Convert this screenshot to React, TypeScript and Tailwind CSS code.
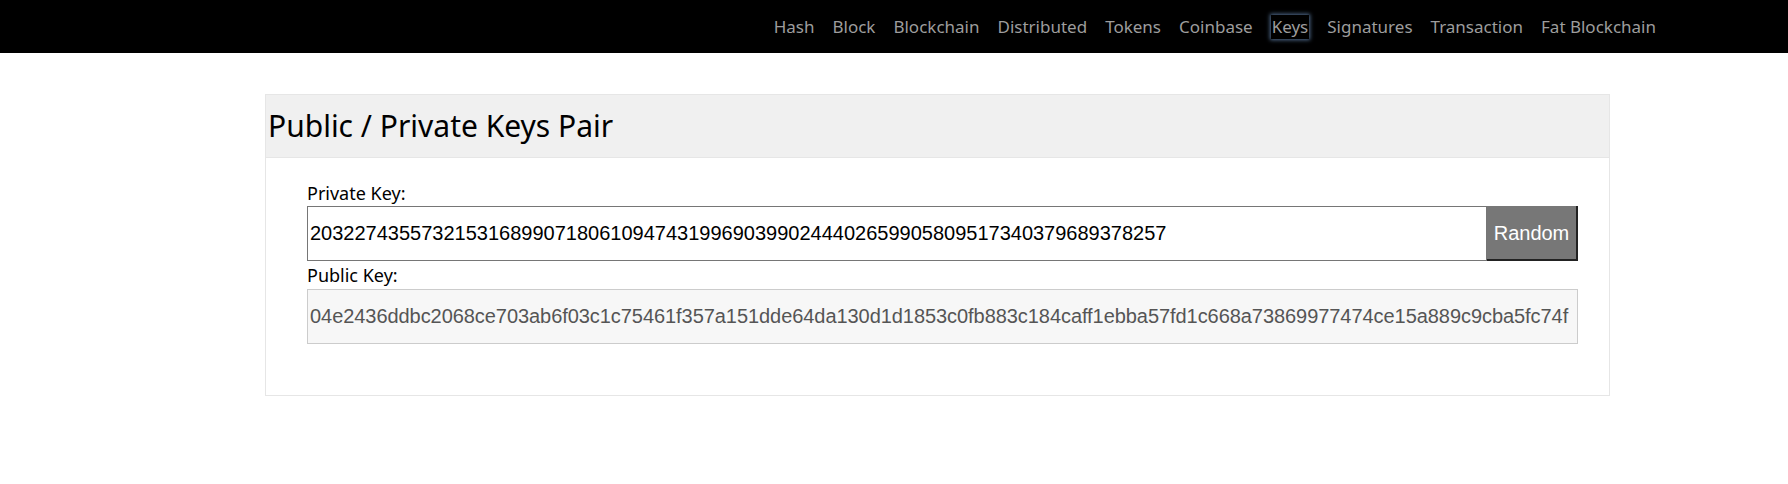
const navItems = [
  "Hash",
  "Block",
  "Blockchain",
  "Distributed",
  "Tokens",
  "Coinbase",
  "Keys",
  "Signatures",
  "Transaction",
  "Fat Blockchain",
];

const privateKey =
  "20322743557321531689907180610947431996903990244402659905809517340379689378257";
const publicKey =
  "04e2436ddbc2068ce703ab6f03c1c75461f357a151dde64da130d1d1853c0fb883c184caff1ebba57fd1c668a73869977474ce15a889c9cba5fc74f";

function NavBar() {
  return (
    <nav className="h-[53px] bg-black flex items-center justify-end pr-[132px]">
      <ul className="flex items-center gap-[18px] text-[17px] text-[#9d9d9d] font-['Noto_Sans',sans-serif]">
        {navItems.map((item) => (
          <li key={item}>
            <a
              href="#"
              className={
                item === "Keys"
                  ? "block px-px leading-[24px] bg-black shadow-[0_0_4px_1px_rgba(120,160,210,0.7)]"
                  : "block leading-[24px]"
              }
            >
              {item}
            </a>
          </li>
        ))}
      </ul>
    </nav>
  );
}

export default function App() {
  return (
    <div className="min-h-[484px] bg-white font-['Noto_Sans',sans-serif]">
      <NavBar />
      <div className="ml-[265px] mt-[41px] w-[1345px] border border-[#e6e6e6]">
        <div className="h-[63px] bg-[#f0f0f0] border-b border-[#e6e6e6] flex items-center px-[2px]">
          <h1 className="text-[30px] text-black leading-none">Public / Private Keys Pair</h1>
        </div>
        <div className="pl-[41px] pr-[31px] pt-[22px] pb-[51px]">
          <label className="block text-[18px] leading-[26px] text-black">Private Key:</label>
          <div className="flex">
            <input
              readOnly
              value={privateKey}
              className="flex-1 h-[55px] border border-[#767676] px-[2px] text-[20px] text-black font-['Liberation_Sans',Arial,sans-serif] outline-none"
            />
            <button className="w-[91px] h-[55px] bg-[#777777] text-white text-[20px] font-['Liberation_Sans',Arial,sans-serif] border-r-2 border-b-2 border-[#222]">
              Random
            </button>
          </div>
          <label className="block text-[18px] leading-[28px] text-black">Public Key:</label>
          <input
            readOnly
            value={publicKey}
            className="block w-full h-[55px] border border-[#cccccc] bg-[#f7f7f7] px-[2px] tracking-[-0.06px] text-[20px] text-[#555555] font-['Liberation_Sans',Arial,sans-serif] outline-none"
          />
        </div>
      </div>
    </div>
  );
}
